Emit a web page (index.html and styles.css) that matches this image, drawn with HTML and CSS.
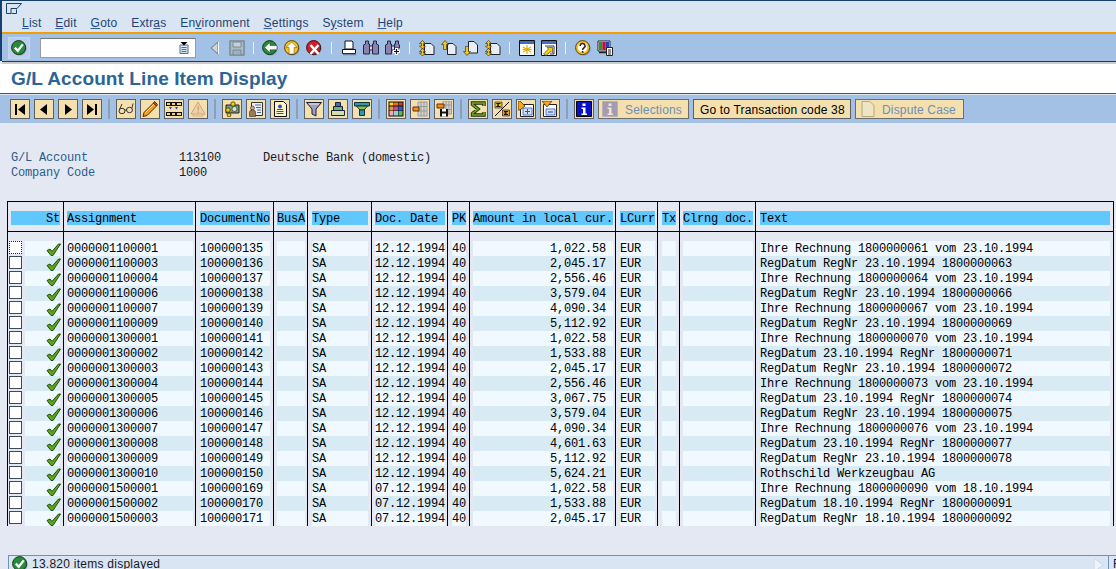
FILE: index.html
```html
<!DOCTYPE html>
<html lang="en">
<head>
<meta charset="utf-8">
<title>G/L Account Line Item Display</title>
<link rel="stylesheet" href="styles.css">
</head>
<body>
<svg class="defs" xmlns="http://www.w3.org/2000/svg">
<symbol id="ok" viewBox="0 0 16 16"><circle cx="8.600" cy="8.600" r="7" fill="#7f93b5"/><circle cx="7.600" cy="7.600" r="7" fill="#2a8a3c" stroke="#12381c"/><path d="M3.800 7.600l3 3.200 5-6.400" fill="none" stroke="#fff" stroke-width="2.300"/></symbol>
<symbol id="check" viewBox="0 0 15 13"><path d="M1 7.500l3-1.500 2 2.400L12.500 1H14.500L7 12.500H5Z" fill="#5ea51d" stroke="#1f4f0c" stroke-width="1"/></symbol>
<symbol id="hist" viewBox="0 0 12 12"><path d="M2 3h8v8.500H2Z" fill="#dbe6f4" stroke="#4d6f92"/><path d="M3.500 5.500h5M3.500 7.500h5M3.500 9.500h5" stroke="#4d6f92"/><path d="M2.500 0h7L6 3.500Z" fill="#000"/></symbol>
<symbol id="tri-l" viewBox="0 0 16 16"><path d="M11 2v12L4 8Z" fill="#cfd4da" stroke="#6b7a8a"/><path d="M11.500 2v12" stroke="#fff"/></symbol>
<symbol id="save" viewBox="0 0 16 16"><path d="M1 1h14v14H1Z" fill="#a9bcc9" stroke="#7a8a90" stroke-width="1.500"/><path d="M4 2h8v5H4Z" fill="#c5d2dc" stroke="#7a8a90"/><path d="M4 10h8v5H4Z" fill="#9fb0bc" stroke="#7a8a90"/></symbol>
<symbol id="back" viewBox="0 0 16 16"><circle cx="8.600" cy="8.600" r="7" fill="#7f93b5"/><circle cx="7.600" cy="7.600" r="7" fill="#2a8a3c" stroke="#12381c"/><path d="M2.500 7.600l5.500-5v3h7v4.200H8v3Z" fill="#fff" stroke="#12381c" stroke-width=".5"/></symbol>
<symbol id="up" viewBox="0 0 16 16"><circle cx="8.600" cy="8.600" r="7" fill="#7f93b5"/><circle cx="7.600" cy="7.600" r="7" fill="#f6c320" stroke="#5a4404"/><path d="M7.600 2l5.500 5.500h-3V14H5.100V7.500h-3Z" fill="#fff" stroke="#5a4404" stroke-width=".5"/></symbol>
<symbol id="cancel" viewBox="0 0 16 16"><circle cx="8.600" cy="8.600" r="7" fill="#7f93b5"/><circle cx="7.600" cy="7.600" r="7" fill="#cc1f2b" stroke="#3d0b0e"/><path d="M4.500 5l8 9M12.500 5l-8 9" stroke="#fff" stroke-width="2.500"/></symbol>
<symbol id="print" viewBox="0 0 16 16"><path d="M4 1h7l1 1v7H4Z" fill="#fff" stroke="#111"/><path d="M1.500 9.500h13v4h-13Z" fill="#fff" stroke="#111"/><path d="M2 14.500h13" stroke="#6f84a5" stroke-width="1.500"/></symbol>
<symbol id="find" viewBox="0 0 16 16"><path d="M2.500 1h3v3h1v10H.5V5l2-1ZM10.500 1h3v3l2 1v9h-6V4h1Z" fill="#8a84ad" stroke="#27264a"/><path d="M6.500 6h3v4h-3Z" fill="#d4d4e6" stroke="#27264a"/></symbol>
<symbol id="findn" viewBox="0 0 16 16"><path d="M2.500 1h3v3h1v10H.5V5l2-1ZM10.500 1h3v3l1 1v3h-5V4h1Z" fill="#8a84ad" stroke="#27264a"/><path d="M6.500 6h3v4h-3Z" fill="#d4d4e6" stroke="#27264a"/><path d="M11.500 8v7M8 11.500h7" stroke="#fff" stroke-width="3"/><path d="M11.500 9v5M9 11.500h5" stroke="#111" stroke-width="1.200"/></symbol>
<symbol id="pg1" viewBox="0 0 16 16"><path d="M5.500 3.500H12l3 3v8H5.500Z" fill="#e9eef4" stroke="#222"/><path d="M3.500 .5l3 3H4.500v2.500h2L3.500 9 .5 6h2V3.500h-2ZM3.500 8.500l3 3h-2v1.500h2l-3 3-3-3h2v-1.500h-2Z" fill="#f5c518" stroke="#222" stroke-width=".6"/></symbol>
<symbol id="pg2" viewBox="0 0 16 16"><path d="M6.500 3.500h5.500l3 3v8H6.500Z" fill="#e9eef4" stroke="#222"/><path d="M4 .5l3.500 4H5.500v5H2.500v-5H.5Z" fill="#f5c518" stroke="#222" stroke-width=".6"/></symbol>
<symbol id="pg3" viewBox="0 0 16 16"><path d="M5.500 1.500h5.500l3.500 3.500v8H5.500Z" fill="#e9eef4" stroke="#222"/><path d="M4 15.500l3.500-4H5.500v-5H2.500v5H.5Z" fill="#f5c518" stroke="#222" stroke-width=".6"/></symbol>
<symbol id="win1" viewBox="0 0 16 16"><path d="M.5.5h15v15H.5Z" fill="#fff" stroke="#111"/><path d="M1 1h14v3H1Z" fill="#3c6fc0"/><path d="M8 5v9M4 7l8 5M12 7l-8 5M3.500 9.500h9" stroke="#e3b100" stroke-width="1.200"/></symbol>
<symbol id="win2" viewBox="0 0 16 16"><path d="M.5.5h15v15H.5Z" fill="#fff" stroke="#111"/><path d="M1 1h14v3H1Z" fill="#3c6fc0"/><path d="M4 6h9v8H9" fill="none" stroke="#333"/><path d="M2.500 14l5-5-1.500-1.500h5.500V13L10 11.500l-5 4Z" fill="#f5d000" stroke="#333" stroke-width=".6"/></symbol>
<symbol id="help" viewBox="0 0 16 16"><circle cx="8.600" cy="8.600" r="7" fill="#7f93b5"/><circle cx="7.600" cy="7.600" r="7" fill="#f6c320" stroke="#5a4404"/><circle cx="7.600" cy="7.600" r="4.700" fill="#fff"/><path d="M5.200 6a2.400 2.400 0 1 1 3.600 2c-1 .6-1.200 1-1.200 2" fill="none" stroke="#222" stroke-width="1.500"/><path d="M6.800 11h1.600v1.800H6.800Z" fill="#222"/></symbol>
<symbol id="layout" viewBox="0 0 16 16"><path d="M1 1h12v10H1Z" fill="#fff" stroke="#222"/><path d="M2 2h3.300v8H2Z" fill="#1e9a3a"/><path d="M5.300 2h3.400v8H5.300Z" fill="#c8122c"/><path d="M8.700 2H12v8H8.700Z" fill="#2940b8"/><path d="M2 12.500h8" stroke="#222" stroke-width="1.500"/><path d="M9.500 7.500h6v8h-6Z" fill="#fff" stroke="#222"/><path d="M11 10h3M11 12h3M11 14h3" stroke="#222"/></symbol>

<symbol id="b-first" viewBox="0 0 16 16"><path d="M3 3h2v11H3ZM13 3v11L6 8.500Z" fill="#000"/></symbol>
<symbol id="b-prev" viewBox="0 0 16 16"><path d="M11 3v11L4 8.500Z" fill="#000"/></symbol>
<symbol id="b-next" viewBox="0 0 16 16"><path d="M5 3v11l7-5.500Z" fill="#000"/></symbol>
<symbol id="b-last" viewBox="0 0 16 16"><path d="M11 3h2v11h-2ZM3 3v11l7-5.500Z" fill="#000"/></symbol>
<symbol id="b-glasses" viewBox="0 0 16 16"><g fill="none" stroke="#222" stroke-width=".9"><ellipse cx="4" cy="10" rx="3" ry="2.700"/><ellipse cx="11.500" cy="9" rx="3" ry="2.700"/><path d="M7 9.500q1-1 1.600-.5M1.500 8.500 4 3M14 7l1-4.500"/></g></symbol>
<symbol id="b-pencil" viewBox="0 0 16 16"><path d="M2 11.500 11.500 2l3 3L5 14.500l-4 1Z" fill="#f2a023" stroke="#4a2b08"/><path d="M3.500 11.500 12 3" stroke="#fdeaa0"/><path d="M11.500 2l3 3 1-1.500-3-3Z" fill="#d8574c" stroke="#4a2b08"/></symbol>
<symbol id="b-cols" viewBox="0 0 16 16"><path d="M0 1h16v4H0ZM0 11h16v4H0Z" fill="#111"/><path d="M1 2h3v2H1ZM6 2h3v2H6ZM11 2h4v2h-4ZM1 12h3v2H1ZM6 12h3v2H6ZM11 12h4v2h-4Z" fill="#f6d35a"/><path d="M3 6h3L4.500 8.500ZM9 6h3l-1.500 2.500Z" fill="#2947a8"/></symbol>
<symbol id="b-warn" viewBox="0 0 16 16"><path d="M8 1 15 13H1Z" fill="#ecd2a6" stroke="#d3a37c"/><path d="M7.500 5h1.500v4.500H7.500ZM7.500 10.500h1.500V12H7.500Z" fill="#d3a37c"/><path d="M3 13v2h10v-2" fill="none" stroke="#c9b48c"/></symbol>
<symbol id="b-money" viewBox="0 0 16 16"><path d="M2 4h13v8H2Z" fill="#7c9c74" stroke="#222"/><circle cx="10.500" cy="8" r="2.500" fill="#d9e4cf" stroke="#222" stroke-width=".6"/><circle cx="4" cy="9" r="2.200" fill="#f5d000" stroke="#222" stroke-width=".7"/><circle cx="9" cy="3" r="2.200" fill="#f5d000" stroke="#222" stroke-width=".7"/><circle cx="5" cy="14" r="1.900" fill="#f5d000" stroke="#222" stroke-width=".7"/></symbol>
<symbol id="b-person" viewBox="0 0 16 16"><path d="M3.500 1.500h11v13h-11Z" fill="#eaf0f5" stroke="#333"/><path d="M7 4h6M8 6.500h5M9 9h4M9 11.500h4" stroke="#4a6a96"/><circle cx="4.500" cy="7" r="2" fill="#d8a070" stroke="#333" stroke-width=".6"/><path d="M1.500 15.500V11q0-2 3-2t3 2v4.500Z" fill="#9a7b52" stroke="#333" stroke-width=".6"/></symbol>
<symbol id="b-doc" viewBox="0 0 16 16"><path d="M2.500 .5h9l3 3v12h-12Z" fill="#fdf5c9" stroke="#111"/><circle cx="8" cy="5.500" r="2" fill="#2b52c6"/><path d="M5 8.500h6M4.500 10.500h7M4.500 12.500h7" stroke="#2b52c6"/></symbol>
<symbol id="b-filter" viewBox="0 0 16 16"><path d="M.5 1.500h15L10 8v7l-4-2V8Z" fill="#9aa4c0" stroke="#1c1c30"/><path d="M3 3h10" stroke="#e6e9f2"/></symbol>
<symbol id="b-stack" viewBox="0 0 16 16"><path d="M5.500 1.500h5v4h-5Z" fill="#3e6fb0" stroke="#15233e"/><path d="M3.500 5.500h9v4h-9Z" fill="#76b06a" stroke="#15233e"/><path d="M1.500 9.500h13v5h-13Z" fill="#cfe0a8" stroke="#15233e"/></symbol>
<symbol id="b-funnel" viewBox="0 0 16 16"><path d="M.5 1.500h15v3.500h-15Z" fill="#2a9cab" stroke="#14303a"/><path d="M2.500 5h11L10 9H6Z" fill="#8fc23f" stroke="#14303a"/><path d="M5.500 9h5v5.500h-5Z" fill="#2a9cab" stroke="#14303a"/></symbol>
<symbol id="b-table" viewBox="0 0 16 16"><path d="M.5.5h15v15H.5Z" fill="#111"/><path d="M1.500 1.500h4v3h-4Z" fill="#f5d43a"/><path d="M6 1.500h4v3H6Z" fill="#e5741e"/><path d="M10.500 1.500h4v3h-4Z" fill="#c93f35"/><path d="M1.500 5.500h4v4h-4Z" fill="#f18f36"/><path d="M6 5.500h4v4H6Z" fill="#c34c8e"/><path d="M10.500 5.500h4v4h-4Z" fill="#2c61c7"/><path d="M1.500 10h4v4.500h-4Z" fill="#f4a7b8"/><path d="M6 10h4v4.500H6Z" fill="#8fd2e5"/><path d="M10.500 10h4v4.500h-4Z" fill="#58b858"/></symbol>
<symbol id="b-tblsel" viewBox="0 0 16 16"><path d="M6 1h9v14H6Z" fill="#d2d2d2" stroke="#999"/><path d="M6 5.500h9M6 10h9M9 1v14M12 1v14" stroke="#999"/><path d="M1 6h6v4H1Z" fill="#f28c1e" stroke="#5c3408"/></symbol>
<symbol id="b-tbldisk" viewBox="0 0 16 16"><path d="M7 0h8.500v13H7Z" fill="#d2d2d2" stroke="#999"/><path d="M7 4h8.500M7 8.500h8.500M10 0v13M13 0v13" stroke="#999"/><path d="M1 3h7v4H1Z" fill="#f28c1e" stroke="#5c3408"/><path d="M4 8h8v7.500H4Z" fill="#111"/><path d="M6 8h4v2.500H6ZM6 12.500h4v3H6Z" fill="#fff"/></symbol>
<symbol id="b-sigma" viewBox="0 0 16 16"><path d="M14 5V2H2.500v1.500L8 8l-5.500 4.500V14H14v-3" fill="none" stroke="#14300a" stroke-width="3.400"/><path d="M14 5V2H2.500v1.500L8 8l-5.500 4.500V14H14v-3" fill="none" stroke="#7fa32a" stroke-width="1.600"/></symbol>
<symbol id="b-sigma2" viewBox="0 0 16 16"><path d="M1 1h7v6H1Z" fill="#f5c518" stroke="#222" stroke-width=".7"/><path d="M8.500 9h7v6h-7Z" fill="#f09a1e" stroke="#222" stroke-width=".7"/><path d="M6.500 2.500h-4L5 4 2.500 5.500h4M14 10.500h-4l2.500 1.500L10 13.500h4" fill="none" stroke="#111"/><path d="M1 15 15 1" stroke="#111"/></symbol>
<symbol id="b-exp" viewBox="0 0 16 16"><path d="M2.500 3.500h13v12h-13Z" fill="#fff" stroke="#222"/><path d="M5 7h9v7H5Z" fill="#d6e3f5" stroke="#2b52c6" stroke-width=".8"/><path d="M9.500 8v5M7 10.500h5" stroke="#2b52c6"/><path d="M0 0h2l5 5-5 4H0Z" fill="#f5a71e" stroke="#222" stroke-width=".7"/></symbol>
<symbol id="b-col" viewBox="0 0 16 16"><path d="M1.500 3.500h13v12h-13Z" fill="#fff" stroke="#222"/><path d="M4 8h9v6H4Z" fill="#d6e3f5" stroke="#2b52c6" stroke-width=".8"/><path d="M6 11h5" stroke="#2b52c6" stroke-width="1.200"/><path d="M0 0h10L5 6Z" fill="#f5a71e" stroke="#222" stroke-width=".7"/></symbol>
<symbol id="b-info" viewBox="0 0 16 16"><path d="M.5.5h15v15H.5Z" fill="#0a10c8" stroke="#000"/><path d="M6.500 2.500h3v2.500h-3ZM5.500 6.500h4v6h1.500v1.500H5.500v-1.500H7V8H5.500Z" fill="#fff"/></symbol>
<symbol id="b-infoff" viewBox="0 0 16 16"><path d="M.5.5h15v15H.5Z" fill="#a59bb5" stroke="#bdb2a8"/><path d="M6.500 2.500h3v2.500h-3ZM5.500 6.500h4v6h1.500v1.500H5.500v-1.500H7V8H5.500Z" fill="#ece5d6"/></symbol>
<symbol id="b-page" viewBox="0 0 14 16"><path d="M1 .5h8l4 4v11H1Z" fill="#ece6c4" stroke="#b9a777"/></symbol>
<symbol id="menuic" viewBox="0 0 16 11"><path d="M.5.500h15L11 5.500H5v5H.5Z" fill="#d9e5f3" stroke="#16406f"/><path d="M5 5.500h6" stroke="#16406f"/><path d="M5.500 10.500h5v-4" fill="none" stroke="#16406f"/></symbol>
</svg>

<div class="app">
  <header class="chrome">
    <div class="menubar">
      <svg class="menuic"><use href="#menuic"/></svg>
      <nav class="menu">
        <a><u>L</u>ist</a><a><u>E</u>dit</a><a><u>G</u>oto</a><a>Extr<u>a</u>s</a><a>En<u>v</u>ironment</a><a><u>S</u>ettings</a><a>S<u>y</u>stem</a><a><u>H</u>elp</a>
      </nav>
    </div>
    <div class="systool">
      <span class="okbox"><svg class="ic"><use href="#ok"/></svg></span>
      <span class="cmd"><svg class="hist"><use href="#hist"/></svg></span>
      <svg class="ic"><use href="#tri-l"/></svg>
      <svg class="ic"><use href="#save"/></svg>
      <i class="vsep tight"></i>
      <svg class="ic"><use href="#back"/></svg>
      <svg class="ic"><use href="#up"/></svg>
      <svg class="ic"><use href="#cancel"/></svg>
      <i class="vsep wide"></i>
      <svg class="ic"><use href="#print"/></svg>
      <svg class="ic"><use href="#find"/></svg>
      <svg class="ic"><use href="#findn"/></svg>
      <i class="vsep"></i>
      <svg class="ic"><use href="#pg1"/></svg>
      <svg class="ic"><use href="#pg2"/></svg>
      <svg class="ic"><use href="#pg3"/></svg>
      <svg class="ic"><use href="#pg1"/></svg>
      <i class="vsep"></i>
      <svg class="ic"><use href="#win1"/></svg>
      <svg class="ic"><use href="#win2"/></svg>
      <i class="vsep"></i>
      <svg class="ic"><use href="#help"/></svg>
      <svg class="ic"><use href="#layout"/></svg>
    </div>
  </header>
  <h1 class="title">G/L Account Line Item Display</h1>
  <div class="apptool">
    <span class="tb"><svg class="ic"><use href="#b-first"/></svg></span>
    <span class="tb"><svg class="ic"><use href="#b-prev"/></svg></span>
    <span class="tb"><svg class="ic"><use href="#b-next"/></svg></span>
    <span class="tb"><svg class="ic"><use href="#b-last"/></svg></span>
    <i class="hsep"></i>
    <span class="tb"><svg class="ic"><use href="#b-glasses"/></svg></span>
    <span class="tb"><svg class="ic"><use href="#b-pencil"/></svg></span>
    <span class="tb"><svg class="ic"><use href="#b-cols"/></svg></span>
    <span class="tb"><svg class="ic"><use href="#b-warn"/></svg></span>
    <i class="hsep"></i>
    <span class="tb"><svg class="ic"><use href="#b-money"/></svg></span>
    <span class="tb"><svg class="ic"><use href="#b-person"/></svg></span>
    <span class="tb"><svg class="ic"><use href="#b-doc"/></svg></span>
    <i class="hsep"></i>
    <span class="tb"><svg class="ic"><use href="#b-filter"/></svg></span>
    <span class="tb"><svg class="ic"><use href="#b-stack"/></svg></span>
    <span class="tb"><svg class="ic"><use href="#b-funnel"/></svg></span>
    <i class="hsep"></i>
    <span class="tb"><svg class="ic"><use href="#b-table"/></svg></span>
    <span class="tb"><svg class="ic"><use href="#b-tblsel"/></svg></span>
    <span class="tb"><svg class="ic"><use href="#b-tbldisk"/></svg></span>
    <i class="hsep"></i>
    <span class="tb"><svg class="ic"><use href="#b-sigma"/></svg></span>
    <span class="tb"><svg class="ic"><use href="#b-sigma2"/></svg></span>
    <span class="tb"><svg class="ic"><use href="#b-exp"/></svg></span>
    <span class="tb"><svg class="ic"><use href="#b-col"/></svg></span>
    <i class="hsep"></i>
    <span class="tb"><svg class="ic"><use href="#b-info"/></svg></span>
    <span class="tb txt off sel"><svg class="ic"><use href="#b-infoff"/></svg><span class="tl">Selections</span></span>
    <span class="tb txt goto"><span class="tl">Go to Transaction code 38</span></span>
    <span class="tb txt off disp"><svg class="pg"><use href="#b-page"/></svg><span class="tl">Dispute Case</span></span>
  </div>
  <main class="content">
    <div class="info">
      <span class="lbl">G/L Account</span><span>113100</span><span>Deutsche Bank (domestic)</span>
      <span class="lbl">Company Code</span><span>1000</span><span></span>
    </div>
    <div class="list">
      <div class="row head"><div class="a first">St</div><div class="a">Assignment</div><div class="b">DocumentNo</div><div class="a">BusA</div><div class="b">Type</div><div class="a">Doc. Date</div><div class="b">PK</div><div class="a">Amount in local cur.</div><div class="l">LCurr</div><div class="b">Tx</div><div class="a">Clrng doc.</div><div class="b">Text</div></div>
      <div class="row gap"><div></div><div></div><div></div><div></div><div></div><div></div><div></div><div></div><div></div><div></div><div></div><div></div></div>
      <div class="row"><div class="mark"><span class="box focus"></span><span class="st"><svg class="chk"><use href="#check"/></svg></span></div><div class="a">0000001100001</div><div class="b">100000135</div><div class="a"></div><div class="b">SA</div><div class="a">12.12.1994</div><div class="b">40</div><div class="a amt">1,022.58</div><div class="l">EUR</div><div class="b"></div><div class="a"></div><div class="b">Ihre Rechnung 1800000061 vom 23.10.1994</div></div>
      <div class="row"><div class="mark"><span class="box"></span><span class="st"><svg class="chk"><use href="#check"/></svg></span></div><div class="a">0000001100003</div><div class="b">100000136</div><div class="a"></div><div class="b">SA</div><div class="a">12.12.1994</div><div class="b">40</div><div class="a amt">2,045.17</div><div class="l">EUR</div><div class="b"></div><div class="a"></div><div class="b">RegDatum RegNr 23.10.1994 1800000063</div></div>
      <div class="row"><div class="mark"><span class="box"></span><span class="st"><svg class="chk"><use href="#check"/></svg></span></div><div class="a">0000001100004</div><div class="b">100000137</div><div class="a"></div><div class="b">SA</div><div class="a">12.12.1994</div><div class="b">40</div><div class="a amt">2,556.46</div><div class="l">EUR</div><div class="b"></div><div class="a"></div><div class="b">Ihre Rechnung 1800000064 vom 23.10.1994</div></div>
      <div class="row"><div class="mark"><span class="box"></span><span class="st"><svg class="chk"><use href="#check"/></svg></span></div><div class="a">0000001100006</div><div class="b">100000138</div><div class="a"></div><div class="b">SA</div><div class="a">12.12.1994</div><div class="b">40</div><div class="a amt">3,579.04</div><div class="l">EUR</div><div class="b"></div><div class="a"></div><div class="b">RegDatum RegNr 23.10.1994 1800000066</div></div>
      <div class="row"><div class="mark"><span class="box"></span><span class="st"><svg class="chk"><use href="#check"/></svg></span></div><div class="a">0000001100007</div><div class="b">100000139</div><div class="a"></div><div class="b">SA</div><div class="a">12.12.1994</div><div class="b">40</div><div class="a amt">4,090.34</div><div class="l">EUR</div><div class="b"></div><div class="a"></div><div class="b">Ihre Rechnung 1800000067 vom 23.10.1994</div></div>
      <div class="row"><div class="mark"><span class="box"></span><span class="st"><svg class="chk"><use href="#check"/></svg></span></div><div class="a">0000001100009</div><div class="b">100000140</div><div class="a"></div><div class="b">SA</div><div class="a">12.12.1994</div><div class="b">40</div><div class="a amt">5,112.92</div><div class="l">EUR</div><div class="b"></div><div class="a"></div><div class="b">RegDatum RegNr 23.10.1994 1800000069</div></div>
      <div class="row"><div class="mark"><span class="box"></span><span class="st"><svg class="chk"><use href="#check"/></svg></span></div><div class="a">0000001300001</div><div class="b">100000141</div><div class="a"></div><div class="b">SA</div><div class="a">12.12.1994</div><div class="b">40</div><div class="a amt">1,022.58</div><div class="l">EUR</div><div class="b"></div><div class="a"></div><div class="b">Ihre Rechnung 1800000070 vom 23.10.1994</div></div>
      <div class="row"><div class="mark"><span class="box"></span><span class="st"><svg class="chk"><use href="#check"/></svg></span></div><div class="a">0000001300002</div><div class="b">100000142</div><div class="a"></div><div class="b">SA</div><div class="a">12.12.1994</div><div class="b">40</div><div class="a amt">1,533.88</div><div class="l">EUR</div><div class="b"></div><div class="a"></div><div class="b">RegDatum 23.10.1994 RegNr 1800000071</div></div>
      <div class="row"><div class="mark"><span class="box"></span><span class="st"><svg class="chk"><use href="#check"/></svg></span></div><div class="a">0000001300003</div><div class="b">100000143</div><div class="a"></div><div class="b">SA</div><div class="a">12.12.1994</div><div class="b">40</div><div class="a amt">2,045.17</div><div class="l">EUR</div><div class="b"></div><div class="a"></div><div class="b">RegDatum RegNr 23.10.1994 1800000072</div></div>
      <div class="row"><div class="mark"><span class="box"></span><span class="st"><svg class="chk"><use href="#check"/></svg></span></div><div class="a">0000001300004</div><div class="b">100000144</div><div class="a"></div><div class="b">SA</div><div class="a">12.12.1994</div><div class="b">40</div><div class="a amt">2,556.46</div><div class="l">EUR</div><div class="b"></div><div class="a"></div><div class="b">Ihre Rechnung 1800000073 vom 23.10.1994</div></div>
      <div class="row"><div class="mark"><span class="box"></span><span class="st"><svg class="chk"><use href="#check"/></svg></span></div><div class="a">0000001300005</div><div class="b">100000145</div><div class="a"></div><div class="b">SA</div><div class="a">12.12.1994</div><div class="b">40</div><div class="a amt">3,067.75</div><div class="l">EUR</div><div class="b"></div><div class="a"></div><div class="b">RegDatum 23.10.1994 RegNr 1800000074</div></div>
      <div class="row"><div class="mark"><span class="box"></span><span class="st"><svg class="chk"><use href="#check"/></svg></span></div><div class="a">0000001300006</div><div class="b">100000146</div><div class="a"></div><div class="b">SA</div><div class="a">12.12.1994</div><div class="b">40</div><div class="a amt">3,579.04</div><div class="l">EUR</div><div class="b"></div><div class="a"></div><div class="b">RegDatum RegNr 23.10.1994 1800000075</div></div>
      <div class="row"><div class="mark"><span class="box"></span><span class="st"><svg class="chk"><use href="#check"/></svg></span></div><div class="a">0000001300007</div><div class="b">100000147</div><div class="a"></div><div class="b">SA</div><div class="a">12.12.1994</div><div class="b">40</div><div class="a amt">4,090.34</div><div class="l">EUR</div><div class="b"></div><div class="a"></div><div class="b">Ihre Rechnung 1800000076 vom 23.10.1994</div></div>
      <div class="row"><div class="mark"><span class="box"></span><span class="st"><svg class="chk"><use href="#check"/></svg></span></div><div class="a">0000001300008</div><div class="b">100000148</div><div class="a"></div><div class="b">SA</div><div class="a">12.12.1994</div><div class="b">40</div><div class="a amt">4,601.63</div><div class="l">EUR</div><div class="b"></div><div class="a"></div><div class="b">RegDatum 23.10.1994 RegNr 1800000077</div></div>
      <div class="row"><div class="mark"><span class="box"></span><span class="st"><svg class="chk"><use href="#check"/></svg></span></div><div class="a">0000001300009</div><div class="b">100000149</div><div class="a"></div><div class="b">SA</div><div class="a">12.12.1994</div><div class="b">40</div><div class="a amt">5,112.92</div><div class="l">EUR</div><div class="b"></div><div class="a"></div><div class="b">RegDatum RegNr 23.10.1994 1800000078</div></div>
      <div class="row"><div class="mark"><span class="box"></span><span class="st"><svg class="chk"><use href="#check"/></svg></span></div><div class="a">0000001300010</div><div class="b">100000150</div><div class="a"></div><div class="b">SA</div><div class="a">12.12.1994</div><div class="b">40</div><div class="a amt">5,624.21</div><div class="l">EUR</div><div class="b"></div><div class="a"></div><div class="b">Rothschild Werkzeugbau AG</div></div>
      <div class="row"><div class="mark"><span class="box"></span><span class="st"><svg class="chk"><use href="#check"/></svg></span></div><div class="a">0000001500001</div><div class="b">100000169</div><div class="a"></div><div class="b">SA</div><div class="a">07.12.1994</div><div class="b">40</div><div class="a amt">1,022.58</div><div class="l">EUR</div><div class="b"></div><div class="a"></div><div class="b">Ihre Rechnung 1800000090 vom 18.10.1994</div></div>
      <div class="row"><div class="mark"><span class="box"></span><span class="st"><svg class="chk"><use href="#check"/></svg></span></div><div class="a">0000001500002</div><div class="b">100000170</div><div class="a"></div><div class="b">SA</div><div class="a">07.12.1994</div><div class="b">40</div><div class="a amt">1,533.88</div><div class="l">EUR</div><div class="b"></div><div class="a"></div><div class="b">RegDatum 18.10.1994 RegNr 1800000091</div></div>
      <div class="row"><div class="mark"><span class="box"></span><span class="st"><svg class="chk"><use href="#check"/></svg></span></div><div class="a">0000001500003</div><div class="b">100000171</div><div class="a"></div><div class="b">SA</div><div class="a">07.12.1994</div><div class="b">40</div><div class="a amt">2,045.17</div><div class="l">EUR</div><div class="b"></div><div class="a"></div><div class="b">RegDatum RegNr 18.10.1994 1800000092</div></div>
    </div>
  </main>
  <footer class="status">
    <svg class="ic"><use href="#ok"/></svg>
    <span class="msg">13.820 items displayed</span>
    <span class="arrow"></span>
    <i class="stsep"></i>
    <span class="stf">F</span>
  </footer>
</div>
</body>
</html>
```
FILE: styles.css
```css
html, body { margin: 0; padding: 0; height: 569px; overflow: hidden; }
body { background: #e4e8f2; font-family: "Liberation Sans", Arial, sans-serif; font-size: 12px; color: #000; }
.defs { display: none; }
svg { display: block; flex: none; }
.app { height: 569px; display: flex; flex-direction: column; overflow: hidden; }

.chrome { border-top: 1px solid #16406f; border-left: 2px solid #16406f; }
.menubar { height: 31px; background: #d9e5f3; padding: 2px 0 0 4px; display: flex; flex-direction: column; box-sizing: border-box; }
.menuic { width: 16px; height: 11px; }
.menu { display: flex; gap: 13.8px; margin: 2px 0 0 16px; color: #1f4472; letter-spacing: .2px; line-height: 15px; }
.menu u { text-decoration-color: #2a5fa8; text-underline-offset: 1px; }

.systool { height: 27px; background: #a3c0e5; border-top: 2px solid #f59c00; display: flex; align-items: center; gap: 6px; padding-left: 6px; box-shadow: 0 1px 0 #333, 0 3px 0 #ccc; }
.ic { width: 16px; height: 16px; }
.okbox { width: 20px; height: 20px; border: 1px solid #c7d6ea; background: #b9cfeb; display: flex; align-items: center; justify-content: center; margin-right: 4px; }
.cmd { width: 149px; height: 18px; background: #fff; border: 1px solid #9c9c9c; border-top-color: #777; display: flex; align-items: center; justify-content: flex-end; padding-right: 5px; margin-right: 5px; }
.hist { width: 12px; height: 12px; }
.vsep { width: 1px; height: 12px; background: #e6eef8; margin: 0 3px 0 2px; }
.vsep.tight { margin: 0 2px; }
.vsep.wide { margin: 0 3px; }

.title { margin: 3px 0 0; height: 29px; line-height: 30px; box-sizing: border-box; background: #fff; color: #2b6496; font-size: 19px; font-weight: bold; padding-left: 11px; letter-spacing: .1px; }

.apptool { border-top: 1px solid #2f5a80; box-shadow: inset 0 1px 0 #dbe6f3; height: 30px; box-sizing: border-box; background: #a3c0e5; display: flex; align-items: center; gap: 4px; padding: 1px 0 0 10px; }
.tb { width: 20px; height: 20px; box-sizing: border-box; border: 1px solid #5f5f5f; background: #f4dfae; display: flex; align-items: center; justify-content: center; flex: none; }
.tb.txt { justify-content: flex-start; letter-spacing: .16px; }
.tl { padding-top: 2px; line-height: 14px; }
.tb.off { color: #6d8fb8; border-color: #6c6c6c; }
.tb.sel { width: 91px; padding-left: 3px; gap: 7px; }
.tb.goto { width: 158px; padding-left: 6px; }
.tb.disp { width: 109px; padding-left: 5px; gap: 7px; }
.pg { width: 14px; height: 16px; }
.hsep { width: 2px; height: 20px; background: #8e9fb4; margin: 0 2px; }

.content { flex: 1; font-family: "Liberation Mono", monospace; font-size: 12px; letter-spacing: -.2px; }
.info { display: grid; grid-template-columns: 168px 84px 1fr; grid-auto-rows: 15px; line-height: 15px; padding: 28px 0 0 11px; height: 30px; color: #1a1a1a; }
.lbl { color: #2b5c8f; }

.list { margin: 20px 0 0 7px; width: 1107px; }
.row { display: grid; grid-template-columns: 56px 132px 78px 34px 64px 76px 22px 146px 42px 22px 76px 359px; height: 15px; line-height: 17px; }
.row > div { box-sizing: border-box; border-left: 1px solid #000; white-space: pre; overflow: hidden; background-clip: content-box; }
.row > div:last-child { border-right: 1px solid #000; }
.row:nth-child(odd) .a, .row:nth-child(odd) .b, .row:nth-child(odd) .l, .row:nth-child(odd) .st { background-color: #eff9ff; }
.row:nth-child(even) .a, .row:nth-child(even) .b, .row:nth-child(even) .l, .row:nth-child(even) .st { background-color: #d8eaf4; }
.row .a { padding: 0 2px 0 3px; }
.row .b { padding: 0 3px 0 4px; }
.row .l { padding: 0 2px 0 4px; }
.row .amt { text-align: right; }
.amt::after { content: " "; }

.row.head { height: 31px; border-top: 1px solid #000; border-bottom: 1px solid #000; box-sizing: border-box; line-height: 16px; }
.list .row.head > div { padding-top: 9px; padding-bottom: 6px; background-color: #60c7ff; }
.list .row.head > .first { padding-left: 3px; padding-right: 3px; text-align: right; }
.row.gap { height: 9px; }

.mark { display: flex; align-items: flex-start; padding-left: 1px; }
.box { width: 13px; height: 13px; box-sizing: border-box; border: 1px solid #3a4a5a; background: #fff; flex: none; }
.box.focus { border: 1px dotted #223; }
.st { width: 35px; height: 15px; margin-left: 3px; display: flex; justify-content: flex-end; flex: none; }
.chk { width: 15px; height: 13px; margin: 2px -1px 0 0; }

.status { height: 13px; margin: 29px 0 0 8px; border-top: 1px solid #6f93b7; border-left: 1px solid #6f93b7; background: #d9e5f3; display: flex; align-items: flex-start; padding-left: 3px; font-size: 12px; letter-spacing: .25px; color: #1a1a1a; }
.msg { margin-left: 4px; line-height: 16px; flex: 1; white-space: nowrap; }
.arrow { width: 0; height: 0; margin-top: 3px; border-left: 8px solid #eef3fa; border-top: 6px solid transparent; border-bottom: 6px solid transparent; filter: drop-shadow(0 0 .5px #6f84a5); }
.stsep { width: 1px; height: 14px; background: #6f93b7; margin: 0 4px 0 5px; }
.stf { width: 3px; line-height: 16px; overflow: hidden; }
```
